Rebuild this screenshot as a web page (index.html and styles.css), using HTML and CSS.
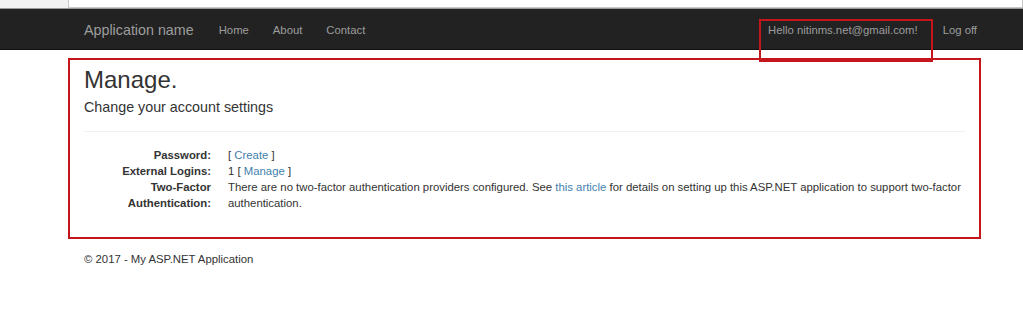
FILE: index.html
```html
<!DOCTYPE html>
<html lang="en">
<head>
  <meta charset="UTF-8" />
  <title>Manage - My ASP.NET Application</title>
  <link rel="stylesheet" href="styles.css">
</head>
<body>
  <div class="chrome">
    <div class="address"></div>
  </div>

  <nav class="navbar">
    <div class="nav-left">
      <a class="brand" href="#">Application name</a>
      <a class="nav-link" href="#">Home</a>
      <a class="nav-link" href="#">About</a>
      <a class="nav-link" href="#">Contact</a>
    </div>
    <div class="nav-right">
      <a class="nav-link" href="#">Hello nitinms.net@gmail.com!</a>
      <a class="nav-link" href="#">Log off</a>
    </div>
  </nav>

  <!-- annotation round the user name -->
  <div class="mark mark-user"></div>

  <div class="body-content">
    <h2>Manage.</h2>
    <h4>Change your account settings</h4>
    <hr>
    <dl class="settings">
      <dt>Password:</dt>
      <dd>[ <a href="#">Create</a> ]</dd>
      <dt>External Logins:</dt>
      <dd>1 [ <a href="#">Manage</a> ]</dd>
      <dt>Two-Factor Authentication:</dt>
      <dd>There are no two-factor authentication providers configured. See <a href="#">this article</a> for details on setting up this ASP.NET application to support two-factor authentication.</dd>
    </dl>
  </div>

  <footer class="footer">
    <p>&copy; 2017 - My ASP.NET Application</p>
  </footer>
</body>
</html>
```

FILE: styles.css
```css
* { box-sizing: border-box; margin: 0; padding: 0; }
html, body {
  font-family: 'Liberation Sans', Arial, sans-serif;
  background: #fff;
  color: #333;
}
body { position: relative; }
a { text-decoration: none; }

.chrome {
  height: 9px;
  background: #f1f1f1;
  border-bottom: 1px solid #9a9a9a;
  padding-left: 68px;
}
.chrome .address {
  height: 8px;
  background: #fff;
  border: 1px solid #c8c8c8;
  border-top: none;
}

.navbar {
  height: 41px;
  background: #222;
  border-bottom: 1px solid #111;
  display: flex;
  justify-content: space-between;
  align-items: center;
  padding: 2px 46px 0 84px;
}
.nav-left, .nav-right {
  display: flex;
  align-items: center;
  gap: 24px;
}
.nav-right { gap: 25px; }
.brand {
  font-size: 14.3px;
  color: #9d9d9d;
  margin-right: 1px;
}
.nav-link {
  font-size: 11.3px;
  color: #9d9d9d;
}

.mark {
  position: absolute;
  border: 2px solid #c4161c;
}
.mark-user {
  left: 759px;
  top: 19px;
  width: 174px;
  height: 43px;
}

.body-content {
  margin: 8px 42px 0 68px;
  border: 2px solid #c4161c;
  padding: 7px 14px 26px 14px;
  height: 181px;
}
h2 {
  font-size: 24px;
  font-weight: 400;
  line-height: 26px;
}
h4 {
  font-size: 14.3px;
  font-weight: 400;
  line-height: 16px;
  margin-top: 6px;
}
hr {
  border: none;
  border-top: 1px solid #f0f0f0;
  margin: 16px 0 15px 0;
}

.settings {
  display: grid;
  grid-template-columns: 127px 1fr;
  column-gap: 17px;
  font-size: 11.35px;
  line-height: 16px;
}
.settings dt {
  font-weight: bold;
  text-align: right;
}
.settings dd a { color: #3f7fad; }

.footer {
  padding: 12px 0 0 84px;
  font-size: 11.35px;
  line-height: 16px;
}
```
